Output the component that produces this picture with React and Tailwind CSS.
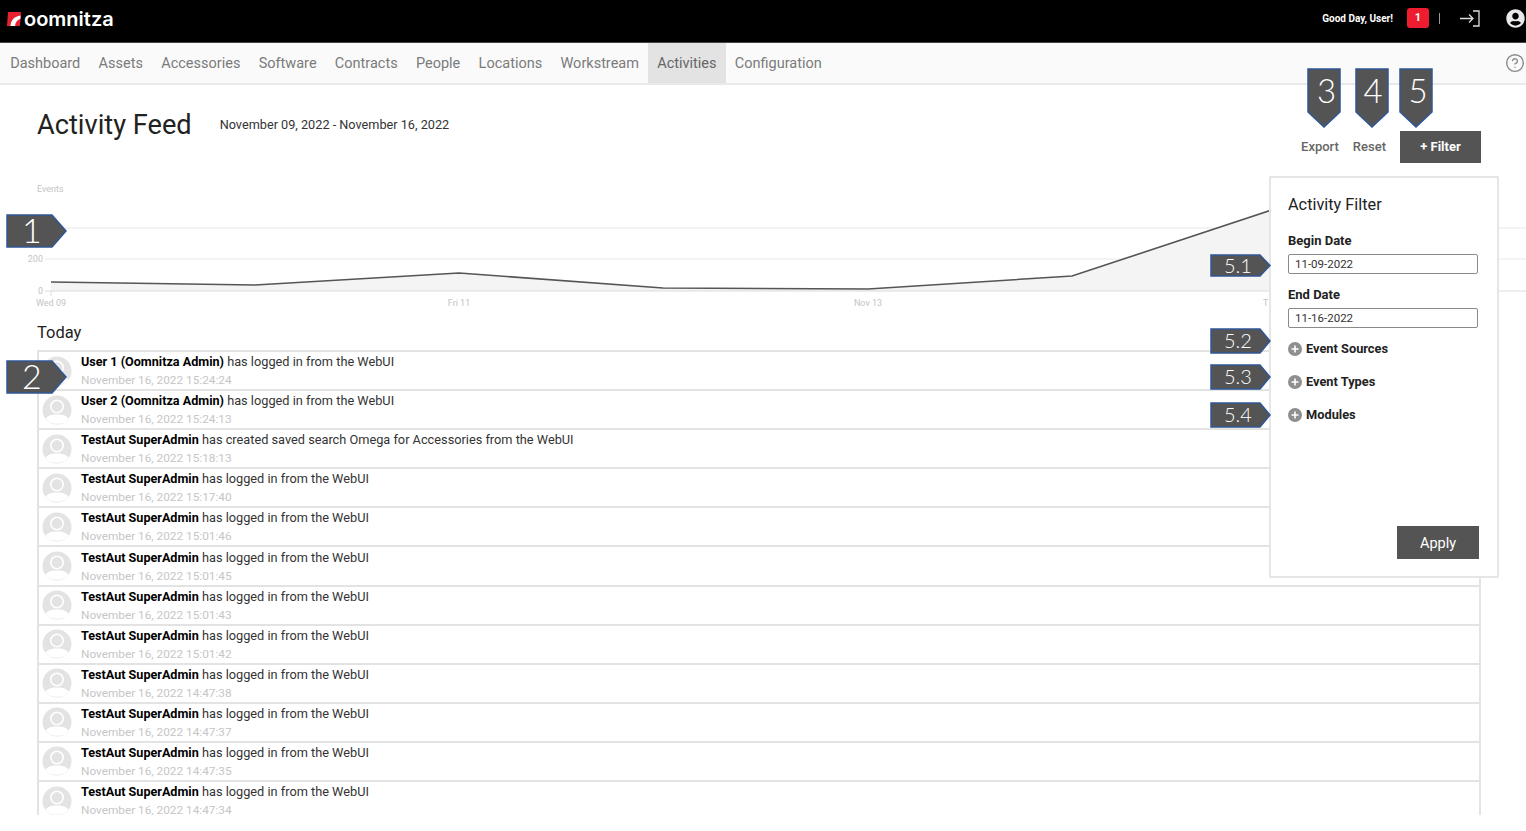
import React from "react";
import { FaUserCircle } from "react-icons/fa";
import { CircleHelp } from "lucide-react";

const navItems = ["Dashboard", "Assets", "Accessories", "Software", "Contracts", "People", "Locations", "Workstream", "Activities", "Configuration"];

const logins = [
  "15:17:40", "15:01:46", "15:01:45", "15:01:43", "15:01:42", "14:47:38", "14:47:37", "14:47:35", "14:47:34",
];

const rows = [
  { user: "User 1 (Oomnitza Admin)", action: "has logged in from the WebUI", time: "15:24:24" },
  { user: "User 2 (Oomnitza Admin)", action: "has logged in from the WebUI", time: "15:24:13" },
  { user: "TestAut SuperAdmin", action: "has created saved search Omega for Accessories from the WebUI", time: "15:18:13" },
  ...logins.map((time) => ({ user: "TestAut SuperAdmin", action: "has logged in from the WebUI", time })),
];

const Avatar = () => (
  <svg width="30" height="30" viewBox="0 0 30 30" className="shrink-0">
    <circle cx="15" cy="15" r="14.5" fill="#e3e3e3" />
    <circle cx="15" cy="11.5" r="6.2" fill="#e3e3e3" stroke="#fff" strokeWidth="1.6" />
    <path d="M3.5 23.5 C7 19.5 11 19.5 15 19.5 C19 19.5 23 19.5 26.5 23.5 C23.5 27.5 19.5 28.8 15 28.8 C10.5 28.8 6.5 27.5 3.5 23.5 Z" fill="#fff" />
  </svg>
);

const PlusIcon = () => (
  <svg width="14" height="14" viewBox="0 0 14 14" className="shrink-0">
    <circle cx="7" cy="7" r="7" fill="#8f8f8f" />
    <path d="M7 3.5v7M3.5 7h7" stroke="#fff" strokeWidth="1.6" />
  </svg>
);

// callout pointing right: w/h are the full box, tip is how long the point is
const RightCallout = ({ label, className, w, h, tip, textClass }) => (
  <div className={`absolute flex items-center ${className}`}>
    <svg width={w} height={h} viewBox={`0 0 ${w} ${h}`} className="absolute inset-0">
      <path
        d={`M1 1H${w - tip}L${w - 1} ${h / 2}L${w - tip} ${h - 1}H1Z`}
        fill="#545454"
        stroke="#2f5597"
        strokeWidth="1.5"
      />
    </svg>
    <span className={`relative text-white font-light font-['Lato',sans-serif] ${textClass}`}>{label}</span>
  </div>
);

const DownCallout = ({ label, className, textClass }) => (
  <div className={`absolute w-[34px] h-[60px] ${className}`}>
    <svg width="34" height="60" viewBox="0 0 34 60" className="absolute inset-0">
      <path d="M1 1H33V44L17 59L1 44Z" fill="#545454" stroke="#2f5597" strokeWidth="1.5" />
    </svg>
    <span className={`absolute inset-x-0 top-[2px] text-center text-white text-[33px] leading-[40px] font-light font-['Lato',sans-serif] ${textClass}`}>{label}</span>
  </div>
);

const Chart = () => (
  <svg width="1526" height="136" viewBox="0 180 1526 136" className="block">
    <text x="37" y="192" fontSize="9" fill="#c4c4c4">Events</text>
    <line x1="51" y1="228" x2="1526" y2="228" stroke="#e8e8e8" />
    <line x1="45" y1="259" x2="1526" y2="259" stroke="#e8e8e8" />
    <path d="M51 282L255 285L459 273L663 288L868 289L1072 276L1290 204V291H51Z" fill="#f4f4f4" />
    <line x1="45" y1="291" x2="1526" y2="291" stroke="#dcdcdc" />
    <line x1="51" y1="291" x2="51" y2="296" stroke="#dcdcdc" />
    <path d="M51 282L255 285L459 273L663 288L868 289L1072 276L1290 204" fill="none" stroke="#555" strokeWidth="1.6" />
    <text x="43" y="262" fontSize="9" fill="#c4c4c4" textAnchor="end">200</text>
    <text x="43" y="294" fontSize="9" fill="#c4c4c4" textAnchor="end">0</text>
    <text x="51" y="306" fontSize="9" fill="#c4c4c4" textAnchor="middle">Wed 09</text>
    <text x="459" y="306" fontSize="9" fill="#c4c4c4" textAnchor="middle">Fri 11</text>
    <text x="868" y="306" fontSize="9" fill="#c4c4c4" textAnchor="middle">Nov 13</text>
    <text x="1263" y="306" fontSize="9" fill="#c4c4c4">T</text>
  </svg>
);

const FilterPanel = () => (
  <div className="absolute left-[1269px] top-[176px] w-[230px] h-[402px] bg-white border-2 border-[#e6e6e6] pl-[17px] pr-[19px] pt-[17px]">
    <h3 className="text-[16.3px] leading-[20px] text-[#222]">Activity Filter</h3>
    <label className="block mt-[18px] text-[13px] leading-[16px] font-bold text-[#222]">Begin Date</label>
    <div className="mt-[5px] h-[20px] border border-[#8a8a8a] rounded-[2px] px-[6px] text-[11.5px] leading-[18px] text-[#333]">11-09-2022</div>
    <label className="block mt-[13px] text-[13px] leading-[16px] font-bold text-[#222]">End Date</label>
    <div className="mt-[5px] h-[20px] border border-[#8a8a8a] rounded-[2px] px-[6px] text-[11.5px] leading-[18px] text-[#333]">11-16-2022</div>
    <div className="mt-[13px] flex flex-col gap-[17px]">
      {["Event Sources", "Event Types", "Modules"].map((name) => (
        <div key={name} className="flex items-center gap-[4px] h-[16px] text-[12.8px] font-bold text-[#222]">
          <PlusIcon />
          {name}
        </div>
      ))}
    </div>
    <button className="absolute right-[18px] bottom-[17px] w-[82px] h-[33px] pt-[2px] bg-[#545454] text-white text-[14.5px]">Apply</button>
  </div>
);

export default function App() {
  return (
    <div className="relative h-[815px] overflow-hidden bg-white font-['Roboto',sans-serif]">
      <header className="h-[43px] bg-black border-b border-[#444] flex items-center justify-between pb-[6px]">
        <div className="flex items-center pl-[7px]">
          <svg width="14" height="14" viewBox="0 0 14 14" className="mr-[3px] mt-[2px]">
            <path d="M1 0H14L13 14H0Z" fill="#e8212e" />
            <path d="M3.5 14C4 8 7.5 4.5 13.6 3.6L13.3 7C10.5 7.5 8.5 10 8 14Z" fill="#fff" />
          </svg>
          <span className="text-white text-[20px] font-semibold leading-none mt-[1px] font-['Inter',sans-serif]">oomnitza</span>
        </div>
        <div className="flex items-center text-white">
          <span className="text-[10px] font-bold">Good Day, User!</span>
          <span className="ml-[14px] w-[22px] h-[20px] rounded-[3px] bg-[#ed1c2e] text-[11px] font-bold flex items-center justify-center">1</span>
          <span className="ml-[10px] w-px h-[11px] bg-[#999]" />
          <svg width="20" height="17" viewBox="0 0 20 17" fill="none" stroke="#ddd" strokeWidth="1.3" className="ml-[20px]">
            <path d="M13 1H19V16H13M0 8.5H13M9 4.5L13 8.5L9 12.5" />
          </svg>
          <FaUserCircle className="ml-[26px] mr-[1px] text-[#e8e8e8]" size={19} />
        </div>
      </header>

      <nav className="h-[42px] bg-[#fafafa] border-b-2 border-[#e9e9e9] flex items-stretch justify-between pl-[1px]">
        <div className="flex items-stretch">
          {navItems.map((item) => (
            <a
              key={item}
              className={`px-[9.15px] pt-[1px] flex items-center text-[14.5px] text-[#7b7b7b] ${item === "Activities" ? "bg-[#e3e3e3] text-[#666]" : ""}`}
            >
              {item}
            </a>
          ))}
        </div>
        <CircleHelp className="mr-[1px] mt-[10px] text-[#8a8a8a]" size={20} strokeWidth={1.7} />
      </nav>

      <div className="h-[95px] flex justify-between pl-[37px] pr-[45px]">
        <div className="flex items-center gap-[28px] h-[36px] mt-[22px]">
          <h1 className="text-[27.2px] leading-[36px] text-[#222]">Activity Feed</h1>
          <span className="text-[12.7px] text-[#333]">November 09, 2022 - November 16, 2022</span>
        </div>
        <div className="flex items-center gap-[14px] self-start mt-[46px]">
          <span className="text-[13px] font-medium text-[#666]">Export</span>
          <span className="text-[13px] font-medium text-[#666]">Reset</span>
          <button className="w-[81px] h-[32px] bg-[#545454] text-white text-[13px] font-bold">+ Filter</button>
        </div>
      </div>

      <Chart />

      <h2 className="pl-[37px] mt-[5px] text-[16.5px] leading-[24px] text-[#222]">Today</h2>

      <div className="ml-[37px] mr-[45px] mt-[5px] border-x-2 border-t-2 border-[#e3e3e3]">
        {rows.map((row) => (
          <div key={row.time} className="h-[39.1px] box-border border-b-2 border-[#e3e3e3] flex items-center gap-[9px] pl-[3px] overflow-hidden">
            <Avatar />
            <div className="min-w-0 pt-[1px]">
              <p className="text-[12.75px] leading-[18px] text-[#333]">
                <span className="text-[12.6px] font-bold text-black">{row.user}</span> {row.action}
              </p>
              <p className="text-[11.8px] leading-[18px] text-[#c6c6c6]">November 16, 2022 {row.time}</p>
            </div>
          </div>
        ))}
      </div>

      <FilterPanel />

      <RightCallout label="1" className="left-[6px] top-[214px] w-[61px] h-[34px] pl-[16px] pb-[3px]" w={61} h={34} tip={15} textClass="text-[34px] leading-none" />
      <RightCallout label="2" className="left-[6px] top-[360px] w-[61px] h-[34px] pl-[16px] pb-[3px]" w={61} h={34} tip={15} textClass="text-[34px] leading-none" />
      <DownCallout label="3" className="left-[1307px] top-[68px]" textClass="pl-[5px]" />
      <DownCallout label="4" className="left-[1355px] top-[68px]" textClass="pl-[2px]" />
      <DownCallout label="5" className="left-[1399px] top-[68px]" textClass="pl-[4px]" />
      <RightCallout label="5.1" className="left-[1210px] top-[254px] w-[61px] h-[23px] pl-[14px] pb-[2px]" w={61} h={23} tip={11} textClass="text-[20px] leading-none" />
      <RightCallout label="5.2" className="left-[1210px] top-[328px] w-[61px] h-[26px] pl-[14px] pb-[2px]" w={61} h={26} tip={11} textClass="text-[20px] leading-none" />
      <RightCallout label="5.3" className="left-[1210px] top-[364px] w-[61px] h-[26px] pl-[14px] pb-[2px]" w={61} h={26} tip={11} textClass="text-[20px] leading-none" />
      <RightCallout label="5.4" className="left-[1210px] top-[402px] w-[61px] h-[26px] pl-[14px] pb-[2px]" w={61} h={26} tip={11} textClass="text-[20px] leading-none" />
    </div>
  );
}
